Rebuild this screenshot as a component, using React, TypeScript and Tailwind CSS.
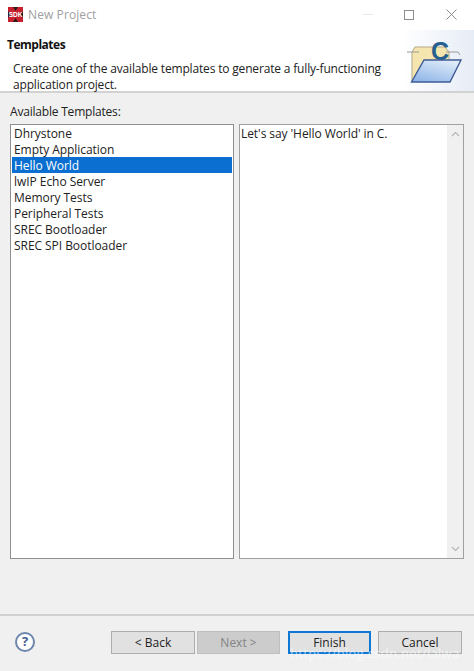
import React from 'react';

const templates = [
  'Dhrystone',
  'Empty Application',
  'Hello World',
  'lwIP Echo Server',
  'Memory Tests',
  'Peripheral Tests',
  'SREC Bootloader',
  'SREC SPI Bootloader',
];

const font = { fontFamily: '"Open Sans", "Noto Sans", sans-serif' };

const SdkLogo = () => (
  <svg width="15" height="15" viewBox="0 0 15 15">
    <rect width="15" height="15" fill="#2a1a1c" />
    <path d="M0 0h5L7.500 4 10 0h5v4l-3 3.500 3 3.500v4h-5L7.500 11 5 15H0v-4l3-3.500L0 4z" fill="#c8202f" />
    <text x="7.500" y="10" textAnchor="middle" fontSize="6.500" fontWeight="700" fill="#fff" fontFamily="Liberation Sans, sans-serif">SDK</text>
  </svg>
);

const FolderIcon = () => (
  <svg width="58" height="43" viewBox="0 0 58 43">
    <defs>
      <linearGradient id="front" x1="0.800" y1="0" x2="0.200" y2="1">
        <stop offset="0" stopColor="#e2edfa" />
        <stop offset="1" stopColor="#8fb6e8" />
      </linearGradient>
    </defs>
    {/* back of folder */}
    <path d="M6 12 L9 7 L39 7 L43 12 L43 38 L6 41 Z" fill="#f5e5ae" stroke="#b3a988" strokeWidth="1" />
    <path d="M1 12 H13 M40 12 H52 L54 15" fill="none" stroke="#9c9c9c" strokeWidth="1" />
    <text x="25" y="19.500" fontSize="25" fontWeight="700" fill="#25608f" fontFamily="Liberation Sans, sans-serif">C</text>
    {/* front panel */}
    <path d="M5.500 42 L18 20 H55 L44 42 Z" fill="url(#front)" stroke="#3f5b96" strokeWidth="1.400" />
  </svg>
);

const ActionButton = ({ label, className }: { label: string; className: string }) => (
  <div className={`h-[23px] pt-px flex items-center justify-center text-xs border ${className}`}>{label}</div>
);

export default function App() {
  return (
    <div className="w-[474px] h-[671px] relative overflow-hidden flex flex-col bg-[#f0f0f0] text-[#222] text-xs" style={font}>
      {/* Title bar */}
      <div className="h-[30px] shrink-0 bg-white flex items-center pl-2 pr-[17px] pb-[1px]">
        <SdkLogo />
        <span className="ml-[5px] text-[#a0a0a0] tracking-[0.1px]">New Project</span>
        <div className="ml-auto flex items-center">
          <div className="w-[10px] h-px bg-[#e8e8e8]" />
          <div className="w-[10px] h-[10px] border border-[#8c8c8c] ml-[31px]" />
          <svg width="11" height="11" viewBox="0 0 11 11" className="ml-[32px]">
            <path d="M.5.5l10 10M10.500.5l-10 10" stroke="#8c8c8c" strokeWidth="1" />
          </svg>
        </div>
      </div>

      {/* Banner */}
      <div className="h-[63px] shrink-0 border-b-2 border-[#d2d2d2] flex justify-between bg-gradient-to-r from-white from-[85%] to-[#e6ecf6]">
        <div className="pl-[7px] pt-[7px]">
          <div className="font-bold leading-[16px] text-[#111] tracking-[-0.5px]">Templates</div>
          <div className="pl-[6px] pt-[8px] leading-[16px] w-[385px] tracking-[-0.17px]">
            Create one of the available templates to generate a fully-functioning application project.
          </div>
        </div>
        <div className="pt-[10px] pr-[10px]">
          <FolderIcon />
        </div>
      </div>

      {/* Body */}
      <div className="flex-1 flex flex-col px-[10px] pt-[11px]">
        <div className="leading-[16px] h-[20px] tracking-[-0.2px]">Available Templates:</div>
        <div className="flex gap-[5px] h-[435px]">
          <div className="w-[224px] bg-white border border-[#8f8f8f] px-px">
            {templates.map((name) => (
              <div
                key={name}
                className={`h-[16px] leading-[17px] pl-[2px] tracking-[-0.05px] ${name === 'Hello World' ? 'bg-[#0b6fd1] text-white' : ''}`}
              >
                {name}
              </div>
            ))}
          </div>
          <div className="w-[225px] bg-white border border-[#a0a0a0] flex">
            <div className="flex-1 pl-[1px] pt-[1px] leading-[16px] tracking-[-0.07px]">Let's say 'Hello World' in C.</div>
            <div className="w-[16px] bg-[#f0f0f0] flex flex-col justify-between items-center py-[6px]">
              <svg width="9" height="6" viewBox="0 0 9 6">
                <path d="M1 5l3.500-3.500L8 5" fill="none" stroke="#b5b5b5" strokeWidth="1.200" />
              </svg>
              <svg width="9" height="6" viewBox="0 0 9 6">
                <path d="M1 1l3.500 3.500L8 1" fill="none" stroke="#b5b5b5" strokeWidth="1.200" />
              </svg>
            </div>
          </div>
        </div>
      </div>

      {/* Footer */}
      <div className="h-[57px] shrink-0 border-t-2 border-[#d0d0d0] flex items-start pt-[15px] pl-[15px] pr-[12px]">
        <div className="w-[20px] h-[20px] mt-px rounded-full border-2 border-[#6d86ad] flex items-center justify-center bg-white text-[#41608f] text-[13px] font-bold">
          ?
        </div>
        <div className="ml-auto flex">
          <ActionButton label="< Back" className="w-[84px] bg-[#e1e1e1] border-[#adadad]" />
          <ActionButton label="Next >" className="w-[83px] ml-[2px] bg-[#cccccc] border-[#bfbfbf] text-[#838383]" />
          <ActionButton label="Finish" className="w-[83px] ml-[8px] bg-[#e1e1e1] border-2 border-[#0f78d4]" />
          <ActionButton label="Cancel" className="w-[84px] ml-[7px] bg-[#e1e1e1] border-[#adadad]" />
        </div>
      </div>

      {/* Watermark */}
      <div className="absolute left-[290px] top-[645px] text-[13px] leading-[16px] text-white/60 tracking-[0.3px] whitespace-nowrap">
        https://blog.csdn.net/lalwa
      </div>
    </div>
  );
}
